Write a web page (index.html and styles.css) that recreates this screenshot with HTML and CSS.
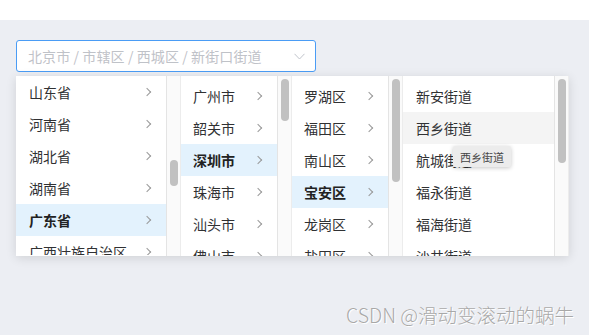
FILE: index.html
```html
<!DOCTYPE html>
<html lang="zh-CN">
<head>
<meta charset="utf-8">
<title>Cascader</title>
<link rel="stylesheet" href="styles.css">
</head>
<body>
<div class="topbar"></div>
<main class="stage">
  <div class="cascader-input">
    <span class="placeholder">北京市 / 市辖区 / 西城区 / 新街口街道</span>
    <svg class="caret" width="11" height="7" viewBox="0 0 11 7"><polyline points="0.5,0.8 5.5,6 10.5,0.8" fill="none" stroke="#c0c4cc" stroke-width="1"/></svg>
  </div>
  <div class="panel">
    <div class="col">
      <ul class="list list-first w150">
        <li>山东省<i class="arr"></i></li>
        <li>河南省<i class="arr"></i></li>
        <li>湖北省<i class="arr"></i></li>
        <li>湖南省<i class="arr"></i></li>
        <li class="active">广东省<i class="arr"></i></li>
        <li>广西壮族自治区<i class="arr"></i></li>
      </ul>
      <div class="track"><div class="thumb" style="margin-top:84px;height:26px"></div></div>
    </div>
    <div class="col">
      <ul class="list w96">
        <li>广州市<i class="arr"></i></li>
        <li>韶关市<i class="arr"></i></li>
        <li class="active">深圳市<i class="arr"></i></li>
        <li>珠海市<i class="arr"></i></li>
        <li>汕头市<i class="arr"></i></li>
        <li>佛山市<i class="arr"></i></li>
      </ul>
      <div class="track"><div class="thumb" style="margin-top:3px;height:42px"></div></div>
    </div>
    <div class="col">
      <ul class="list w96">
        <li>罗湖区<i class="arr"></i></li>
        <li>福田区<i class="arr"></i></li>
        <li>南山区<i class="arr"></i></li>
        <li class="active">宝安区<i class="arr"></i></li>
        <li>龙岗区<i class="arr"></i></li>
        <li>盐田区<i class="arr"></i></li>
      </ul>
      <div class="track"><div class="thumb" style="margin-top:3px;height:103px"></div></div>
    </div>
    <div class="col">
      <ul class="list w151">
        <li>新安街道</li>
        <li class="hover">西乡街道</li>
        <li>航城街道</li>
        <li>福永街道</li>
        <li>福海街道</li>
        <li>沙井街道</li>
      </ul>
      <div class="track"><div class="thumb" style="margin-top:3px;height:84px"></div></div>
    </div>
    <div class="tooltip">西乡街道</div>
  </div>
</main>
<div class="watermark">CSDN @滑动变滚动的蜗牛</div>
</body>
</html>
```
FILE: styles.css
```css
* { box-sizing: border-box; }
html, body {
  margin: 0;
  padding: 0;
  width: 589px;
  height: 335px;
  overflow: hidden;
  background: #eceef3;
  font-family: "Noto Sans CJK SC", "Noto Sans", sans-serif;
  color: #303133;
}
.topbar {
  height: 20px;
  background: #ffffff;
}
.stage {
  padding: 20px 0 0 16px;
  position: relative;
}
.cascader-input {
  width: 300px;
  height: 32px;
  border: 1px solid #4a9cf5;
  border-radius: 3px;
  background: #ffffff;
  display: flex;
  align-items: center;
  justify-content: space-between;
  padding: 0 10px 0 11px;
}
.placeholder {
  font-size: 14px;
  color: #bfc2c8;
  letter-spacing: 0.1px;
}
.caret { display: block; margin-top: 1px; }
.panel {
  position: relative;
  margin-top: 4px;
  width: 553px;
  height: 180px;
  background: #ffffff;
  display: flex;
  box-shadow: 0 2px 10px rgba(0,0,0,0.12);
  overflow: hidden;
}
.col {
  display: flex;
  height: 180px;
}
.list {
  list-style: none;
  margin: 0;
  padding: 3px 0 0 0;
  overflow: hidden;
  height: 180px;
}
.list-first { padding-top: 0; margin-top: -1px; }
.w150 { width: 150px; }
.w96 { width: 96px; }
.w151 { width: 151px; }
.list li {
  height: 32px;
  display: flex;
  align-items: center;
  justify-content: space-between;
  padding: 0 14px 0 13px;
  font-size: 14px;
  color: #303133;
  white-space: nowrap;
}
.list li:first-child { margin-top: 1px; }
.list li.active {
  background: #e3f2fd;
  font-weight: 700;
  color: #222;
}
.w96 li { padding-left: 12px; }
.list li.hover { background: #f4f4f4; }
.arr {
  width: 6px;
  height: 6px;
  border-right: 1px solid #999;
  border-top: 1px solid #999;
  transform: rotate(45deg);
  margin-right: 2px;
  flex: none;
}
.track {
  width: 15px;
  height: 180px;
  border-left: 1px solid #e4e4e4;
  border-right: 1px solid #ececec;
  background: #fafafa;
  padding: 0 2px 0 3px;
}
.thumb {
  width: 8px;
  border-radius: 4px;
  background: #c1c1c1;
}
.tooltip {
  position: absolute;
  left: 437px;
  top: 70px;
  width: 58px;
  height: 21px;
  background: #ececec;
  border-radius: 2px;
  box-shadow: 0 1px 4px rgba(0,0,0,0.22);
  font-size: 11px;
  color: #444;
  display: flex;
  align-items: center;
  justify-content: center;
}
.watermark {
  position: absolute;
  right: 15px;
  bottom: 6px;
  font-size: 19.5px;
  font-weight: 300;
  color: #a8a8a8;
  text-shadow: 0 0 1px #fff, 1px 1px 0 #fff;
  white-space: nowrap;
}
```
